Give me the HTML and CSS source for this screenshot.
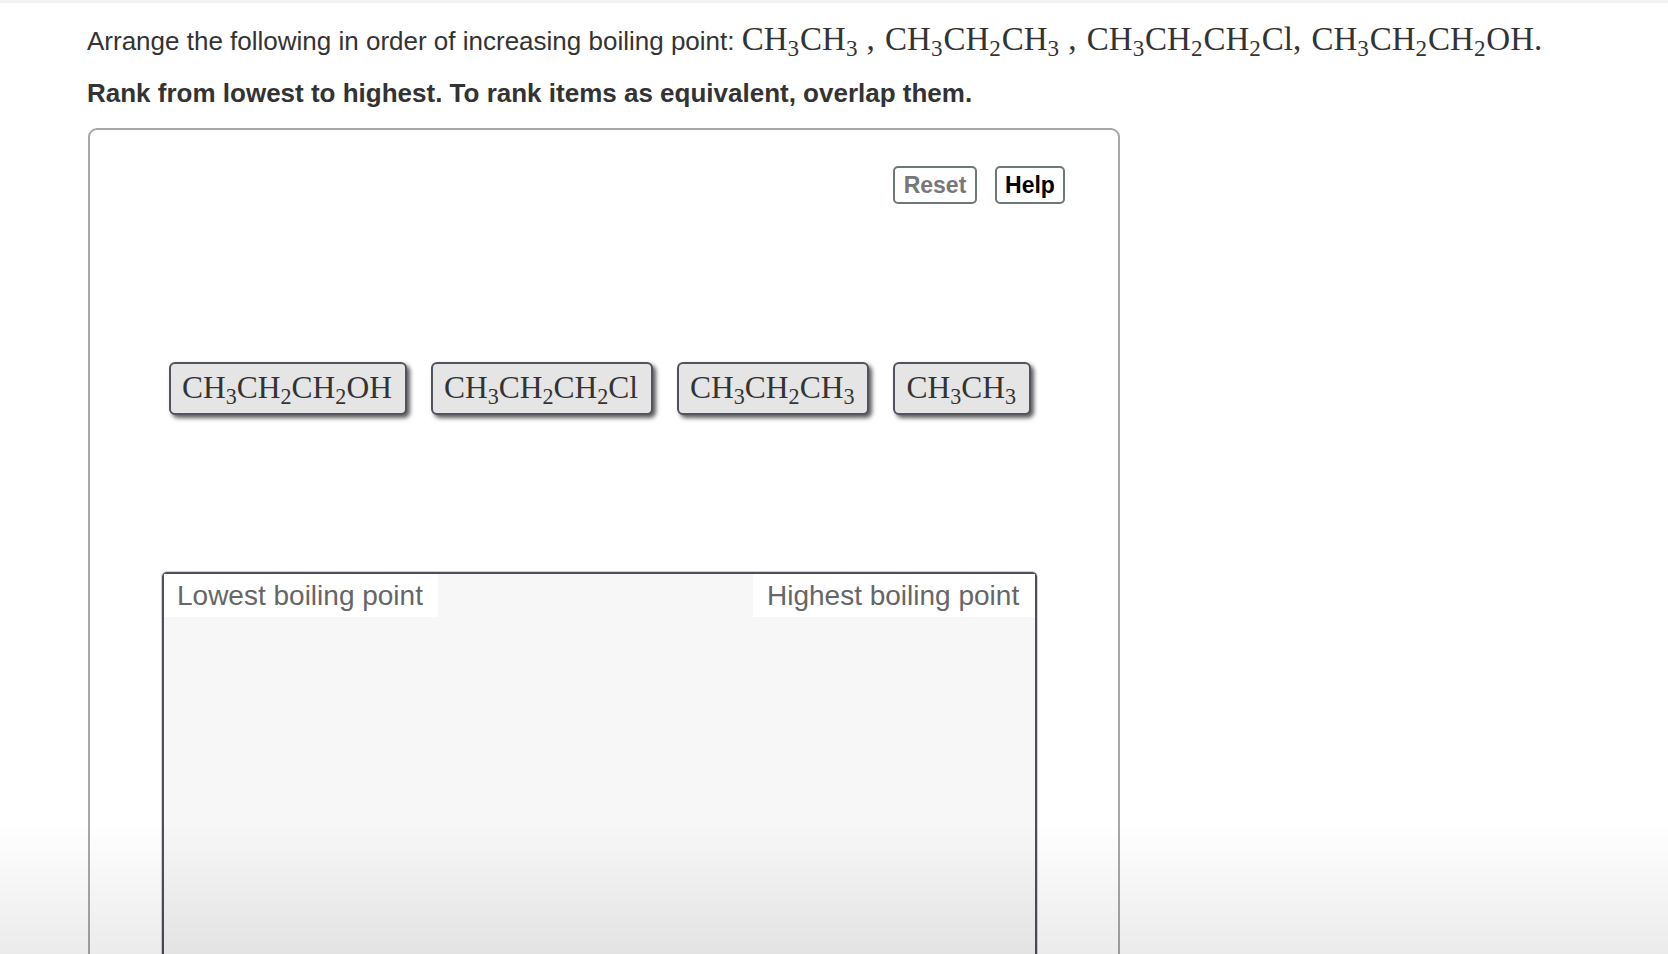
FILE: index.html
```html
<!DOCTYPE html>
<html lang="en">
<head>
<meta charset="utf-8">
<title>Rank boiling points</title>
<link rel="stylesheet" href="styles.css">
</head>
<body>
<div class="topbar"></div>
<main class="page">
  <p class="question">Arrange the following in order of increasing boiling point: <span class="chem">CH<sub>3</sub>CH<sub>3</sub><span class="sep"> ,</span> CH<sub>3</sub>CH<sub>2</sub>CH<sub>3</sub><span class="sep"> ,</span> CH<sub>3</sub>CH<sub>2</sub>CH<sub>2</sub>Cl<span class="sep">,</span> CH<sub>3</sub>CH<sub>2</sub>CH<sub>2</sub>OH.</span></p>
  <p class="instr">Rank from lowest to highest. To rank items as equivalent, overlap them.</p>
  <section class="panel">
    <div class="toolbar">
      <button class="btn btn-reset" type="button">Reset</button>
      <button class="btn btn-help" type="button">Help</button>
    </div>
    <div class="chips">
      <div class="chip">CH<sub>3</sub>CH<sub>2</sub>CH<sub>2</sub>OH</div>
      <div class="chip">CH<sub>3</sub>CH<sub>2</sub>CH<sub>2</sub>Cl</div>
      <div class="chip">CH<sub>3</sub>CH<sub>2</sub>CH<sub>3</sub></div>
      <div class="chip">CH<sub>3</sub>CH<sub>3</sub></div>
    </div>
    <div class="rank">
      <div class="rank-labels">
        <span class="rank-label">Lowest boiling point</span>
        <span class="rank-label rank-label-high">Highest boiling point</span>
      </div>
    </div>
  </section>
</main>
<div class="fade"></div>
</body>
</html>
```
FILE: styles.css
```css
html, body {
  margin: 0;
  padding: 0;
  background: #ffffff;
  overflow: hidden;
  height: 100%;
}
body {
  font-family: "Liberation Sans", Arial, Helvetica, sans-serif;
  color: #333333;
}
.topbar {
  height: 3px;
  background: #f2f2f2;
}
.page {
  padding: 21px 0 0 87px;
}
.question {
  margin: 0;
  font-size: 26px;
  line-height: 30px;
  height: 30px;
  white-space: nowrap;
}
.chem {
  font-family: "Liberation Serif", "Times New Roman", serif;
  font-size: 33px;
}
.chem sub {
  margin-right: 0.04em;
}
.chem .sep {
  margin-right: 2px;
}
sub {
  font-size: 70%;
  line-height: 0;
  vertical-align: -0.28em;
}
.instr {
  margin: 24px 0 0 0;
  font-size: 26px;
  line-height: 30px;
  font-weight: bold;
}
.panel {
  margin: 20px 0 0 1px;
  width: 1032px;
  height: 900px;
  box-sizing: border-box;
  border: 2px solid #a8a8a8;
  border-radius: 9px;
  display: flex;
  flex-direction: column;
}
.toolbar {
  display: flex;
  justify-content: flex-end;
  gap: 18px;
  padding: 36px 53px 0 0;
}
.btn {
  height: 38px;
  box-sizing: border-box;
  border: 2px solid #6f7878;
  border-radius: 5px;
  background: #ffffff;
  font-family: "Liberation Sans", Arial, Helvetica, sans-serif;
  font-weight: bold;
  font-size: 23px;
  line-height: 34px;
  padding: 0 8px;
}
.btn-reset {
  color: #777777;
  width: 84px;
}
.btn-help {
  color: #000000;
  width: 70px;
}
.chips {
  display: flex;
  gap: 24px;
  margin-top: 158px;
  padding-left: 79px;
}
.chip {
  height: 53px;
  box-sizing: border-box;
  border: 2px solid #53535e;
  border-radius: 6px;
  background: #e5e5e5;
  box-shadow: 3px 3px 4px rgba(50, 50, 50, 0.8);
  font-family: "Liberation Serif", "Times New Roman", serif;
  font-size: 31.5px;
  line-height: 47px;
  padding: 0 13px 0 11px;
  color: #333333;
  white-space: nowrap;
}
.rank {
  margin: 157px 0 0 72px;
  width: 875px;
  flex: 1;
  box-sizing: border-box;
  border: 2px solid #4e4e5c;
  border-bottom: none;
  border-radius: 5px 5px 0 0;
  box-shadow: 0 0 0 1px #cfd0e4;
  background: #f7f7f7;
}
.rank-labels {
  display: flex;
  justify-content: space-between;
}
.rank-label {
  background: #ffffff;
  color: #666666;
  font-size: 28px;
  line-height: 43px;
  height: 43px;
  width: 274px;
  box-sizing: border-box;
  padding-left: 13px;
  white-space: nowrap;
}
.rank-label-high {
  width: 282px;
  padding-left: 14px;
}
.fade {
  position: fixed;
  left: 0;
  right: 0;
  bottom: 0;
  height: 130px;
  background: linear-gradient(rgba(0, 0, 0, 0), rgba(0, 0, 0, 0.08));
  pointer-events: none;
}
```
